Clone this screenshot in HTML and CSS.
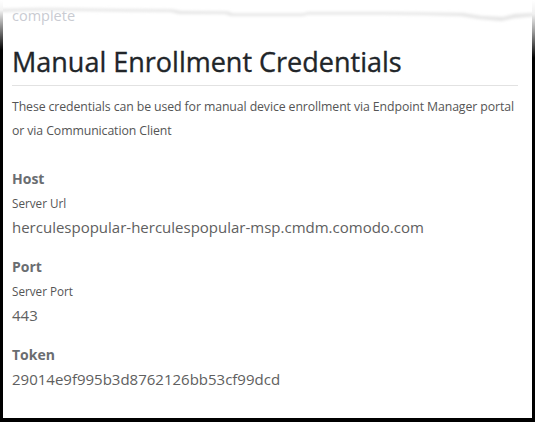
FILE: index.html
```html
<!DOCTYPE html>
<html>
<head>
<meta charset="utf-8">
<link rel="stylesheet" href="styles.css">
</head>
<body>
<div class="frame">
  <div class="row">
    <div class="edge edge-left"></div>
    <main class="page">
      <svg class="torn" width="529" height="30" viewBox="0 0 529 30" aria-hidden="true">
        <defs>
          <filter id="soft" x="-5%" y="-100%" width="110%" height="300%">
            <feGaussianBlur stdDeviation="1.6"/>
          </filter>
        </defs>
        <path filter="url(#soft)" fill="#e4e4e4" d="M-5 9 L40 8 L80 8.5 L120 9 L170 9.5 L178 11 L225 11.5 L230 13.5 L300 13.5 L305 12 L380 12 L420 12.5 L460 13 L478 16 L500 17 L512 14 L535 13 L535 16 L512 18 L498 21 L476 19 L458 16 L420 15 L380 14.5 L305 14.5 L300 16 L228 16 L222 14 L176 14 L168 12 L120 11.5 L80 11 L40 10.5 L-5 12 Z"/>
      </svg>
      <div class="crumb">complete</div>
      <h1 class="title">Manual Enrollment Credentials</h1>
      <p class="intro">These credentials can be used for manual device enrollment via Endpoint Manager portal<br>or via Communication Client</p>
      <section class="field">
        <div class="label">Host</div>
        <div class="sub">Server Url</div>
        <div class="value">herculespopular-herculespopular-msp.cmdm.comodo.com</div>
      </section>
      <section class="field">
        <div class="label">Port</div>
        <div class="sub">Server Port</div>
        <div class="value">443</div>
      </section>
      <section class="field">
        <div class="label">Token</div>
        <div class="value">29014e9f995b3d8762126bb53cf99dcd</div>
      </section>
    </main>
    <div class="edge edge-right"></div>
  </div>
  <div class="bottom"></div>
</div>
</body>
</html>
```
FILE: styles.css
```css
html, body {
  margin: 0;
  padding: 0;
  background: #000;
}
.frame {
  width: 535px;
  height: 422px;
  display: flex;
  flex-direction: column;
  overflow: hidden;
}
.row {
  display: flex;
  height: 418px;
}
.edge {
  width: 3px;
  flex: none;
}
.edge-left {
  background: linear-gradient(to bottom, #fff 0px, #f4f4f4 10px, #888 28px, #000 50px);
}
.edge-right {
  background: linear-gradient(to bottom, #fff 0px, #f0f0f0 14px, #999 32px, #000 58px);
}
.bottom {
  height: 4px;
  background: #000;
}
.page {
  position: relative;
  flex: 1;
  min-width: 0;
  background: #fff;
  padding: 6px 14px 0 9px;
  font-family: "Open Sans", "Noto Sans", sans-serif;
  color: #555;
}
.torn {
  position: absolute;
  left: 0;
  top: 0;
  pointer-events: none;
}
.crumb {
  font-size: 14.5px;
  line-height: 20px;
  color: #c9cbd2;
}
.title {
  margin: 17.5px 0 0;
  font-size: 27px;
  line-height: 36px;
  font-weight: 400;
  color: #212529;
  -webkit-text-stroke: 0.35px #212529;
  padding-bottom: 5.5px;
  border-bottom: 1px solid #e2e2e2;
}
.intro {
  margin: 9px -8px 0 0;
  font-size: 12.3px;
  letter-spacing: -0.1px;
  line-height: 24px;
  color: #555;
}
.field {
  margin-top: 16px;
}
.field:first-of-type {
  margin-top: 24px;
}
.label {
  font-size: 14px;
  line-height: 24px;
  font-weight: 700;
  color: #6a6d71;
}
.sub {
  font-size: 11.7px;
  line-height: 24px;
  color: #555;
}
.value {
  font-size: 15px;
  line-height: 24px;
  color: #606060;
}
```
